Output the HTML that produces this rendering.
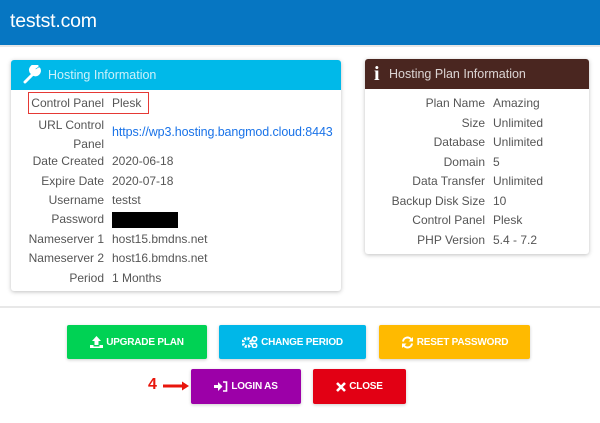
<!DOCTYPE html>
<html><head><meta charset="utf-8"><style>
*{margin:0;padding:0;box-sizing:border-box}
body{width:600px;height:423px;background:#fff;font-family:"Liberation Sans",sans-serif;position:relative;overflow:hidden;color:#555}
.abs{position:absolute}
.hdr{left:0;top:0;width:600px;height:45px;background:#0676c2}
.title{left:10px;top:10px;font-size:19.5px;color:#fff;letter-spacing:-0.2px}
.sep{left:0;top:45px;width:600px;height:2px;background:#e6e6e6}
.panel{background:#fff;border-radius:3px;box-shadow:0 1px 4px rgba(0,0,0,.25)}
.ph{position:absolute;left:0;top:0;right:0;height:30px;border-radius:3px 3px 0 0;color:rgba(255,255,255,.8);font-size:12.5px;line-height:30px}
.lbl{position:absolute;text-align:right;color:#555;white-space:nowrap;font-size:12px}
.val{position:absolute;color:#555;white-space:nowrap;font-size:12px}
.btn{position:absolute;color:#fff;font-size:10px;font-weight:bold;display:flex;align-items:center;justify-content:center;border-radius:2px;box-shadow:0 1px 3px rgba(0,0,0,.2);letter-spacing:-0.2px;white-space:nowrap}
.btn svg{margin-right:3px}
</style></head><body>
<div class="abs hdr"></div>
<div class="abs title">testst.com</div>
<div class="abs sep"></div>

<div class="abs panel" style="left:11px;top:60px;width:330px;height:231px">
 <div class="ph" style="background:#00b9e9">
  <svg class="abs" style="left:11px;top:5px" width="20" height="20" viewBox="0 0 20 20"><path d="M3 17 L11 9 M11 9 A4 4 0 0 0 17 4 L14 6 L12 5 L12 3 L15 1 A4.5 4.5 0 0 0 9 7 Z" fill="#fff" stroke="#fff" stroke-width="3" stroke-linecap="round" stroke-linejoin="round"/></svg>
  <span style="position:absolute;left:37px">Hosting Information</span>
 </div>
</div>
<div class="abs" style="left:28px;top:92px;width:121px;height:22px;border:1.5px solid #e53935"></div>

<div class="lbl" style="left:0;width:104px;top:96px">Control Panel</div><div class="val" style="left:112px;top:96px">Plesk</div>
<div class="lbl" style="left:0;width:104px;top:116px;line-height:19px">URL Control<br>Panel</div><div class="val" style="left:112px;top:125px;color:#1a73e8;font-size:12.5px;letter-spacing:-0.1px">https://wp3.hosting.bangmod.cloud:8443</div>
<div class="lbl" style="left:0;width:104px;top:154px">Date Created</div><div class="val" style="left:112px;top:154px">2020-06-18</div>
<div class="lbl" style="left:0;width:104px;top:174px">Expire Date</div><div class="val" style="left:112px;top:174px">2020-07-18</div>
<div class="lbl" style="left:0;width:104px;top:193px">Username</div><div class="val" style="left:112px;top:193px">testst</div>
<div class="lbl" style="left:0;width:104px;top:212px">Password</div><div class="val" style="left:112px;top:212px;width:66px;height:16px;background:#000"></div>
<div class="lbl" style="left:0;width:104px;top:232px">Nameserver 1</div><div class="val" style="left:112px;top:232px">host15.bmdns.net</div>
<div class="lbl" style="left:0;width:104px;top:251px">Nameserver 2</div><div class="val" style="left:112px;top:251px">host16.bmdns.net</div>
<div class="lbl" style="left:0;width:104px;top:271px">Period</div><div class="val" style="left:112px;top:271px">1 Months</div>

<div class="abs panel" style="left:365px;top:59px;width:224px;height:195px">
 <div class="ph" style="background:#4a2620">
  <span style="position:absolute;left:9px;top:0;font-family:'Liberation Serif',serif;font-weight:bold;font-size:20px;color:#fff">i</span>
  <span style="position:absolute;left:24px">Hosting Plan Information</span>
 </div>
</div>
<div class="lbl" style="left:365px;width:120px;top:96px">Plan Name</div><div class="val" style="left:493px;top:96px">Amazing</div>
<div class="lbl" style="left:365px;width:120px;top:116px">Size</div><div class="val" style="left:493px;top:116px">Unlimited</div>
<div class="lbl" style="left:365px;width:120px;top:135px">Database</div><div class="val" style="left:493px;top:135px">Unlimited</div>
<div class="lbl" style="left:365px;width:120px;top:155px">Domain</div><div class="val" style="left:493px;top:155px">5</div>
<div class="lbl" style="left:365px;width:120px;top:174px">Data Transfer</div><div class="val" style="left:493px;top:174px">Unlimited</div>
<div class="lbl" style="left:345px;width:140px;top:194px">Backup Disk Size</div><div class="val" style="left:493px;top:194px">10</div>
<div class="lbl" style="left:365px;width:120px;top:213px">Control Panel</div><div class="val" style="left:493px;top:213px">Plesk</div>
<div class="lbl" style="left:365px;width:120px;top:233px">PHP Version</div><div class="val" style="left:493px;top:233px">5.4 - 7.2</div>

<div class="abs" style="left:0;top:306px;width:600px;height:2px;background:#e8e8e8"></div>

<div class="btn" style="left:67px;top:325px;width:140px;height:34px;background:#00d254">
 <svg width="13" height="12" viewBox="0 0 13 12"><path d="M6.5 0 L11 5 H8.5 V9 H4.5 V5 H2 Z M0 9 H3.5 V10.5 H9.5 V9 H13 V12 H0Z" fill="#fff"/></svg>UPGRADE PLAN</div>
<div class="btn" style="left:219px;top:325px;width:147px;height:34px;background:#00b7e8">
 <svg width="16" height="12" viewBox="0 0 16 12"><circle cx="5" cy="6.5" r="4" fill="none" stroke="#fff" stroke-width="3" stroke-dasharray="2 1.2"/><circle cx="12.5" cy="3" r="2.2" fill="none" stroke="#fff" stroke-width="1.6"/><circle cx="12.5" cy="9.5" r="2.2" fill="none" stroke="#fff" stroke-width="1.6"/></svg>CHANGE PERIOD</div>
<div class="btn" style="left:379px;top:325px;width:151px;height:34px;background:#ffba00">
 <svg width="13" height="13" viewBox="0 0 13 13"><path d="M2 5.5 A4.5 4.5 0 0 1 10.5 4 M11 7.5 A4.5 4.5 0 0 1 2.5 9" fill="none" stroke="#fff" stroke-width="2"/><path d="M12 1 V5.5 H7.5Z M1 12 V7.5 H5.5Z" fill="#fff"/></svg>RESET PASSWORD</div>
<div class="btn" style="left:191px;top:369px;width:110px;height:35px;background:#9c00a8">
 <svg width="14" height="11" viewBox="0 0 14 11"><path d="M0 4 H4 V1 L8.5 5.5 L4 10 V7 H0Z" fill="#fff"/><path d="M9 1 H12.5 V10 H9" fill="none" stroke="#fff" stroke-width="1.6"/></svg>LOGIN AS</div>
<div class="btn" style="left:313px;top:369px;width:93px;height:35px;background:#e20014">
 <svg width="10" height="10" viewBox="0 0 10 10"><path d="M1 1 L9 9 M9 1 L1 9" stroke="#fff" stroke-width="2.6"/></svg>CLOSE</div>

<div class="abs" style="left:148px;top:376px;font-size:16px;font-weight:bold;color:#e8160c">4</div>
<svg class="abs" style="left:163px;top:381px" width="27" height="10" viewBox="0 0 27 10"><path d="M0 3.5 H19 V0.5 L26 5 L19 9.5 V6.5 H0Z" fill="#e8160c"/></svg>
</body></html>
